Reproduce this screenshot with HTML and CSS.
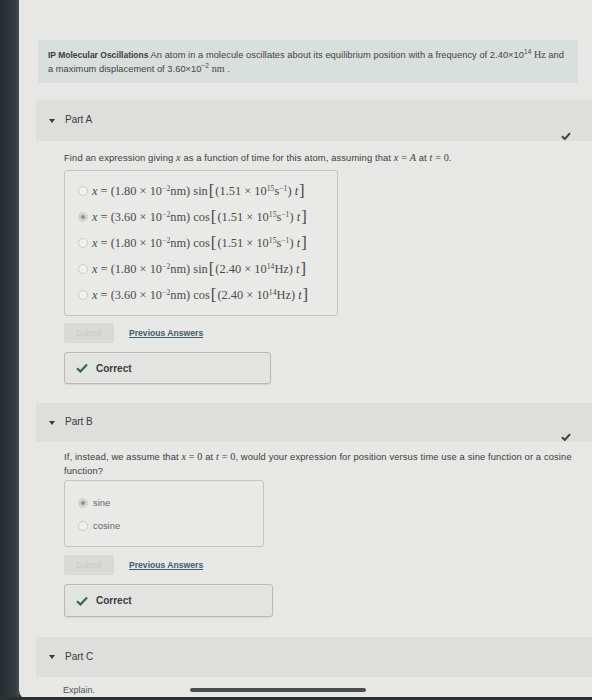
FILE: index.html
```html
<!DOCTYPE html>
<html>
<head>
<meta charset="utf-8">
<link rel="stylesheet" href="styles.css">
</head>
<body>
<div class="screen">
  <div class="bezel"></div>
  <div class="page">
    <div class="intro">
      <b>IP Molecular Oscillations</b> An atom in a molecule oscillates about its equilibrium position with a frequency of 2.40×10<sup>14</sup> <span class="m">Hz</span> and a maximum displacement of 3.60×10<sup>−2</sup> <span class="m">nm</span> .
    </div>

    <section class="part part-a">
      <div class="part-head">
        <span class="tri"></span><span class="part-title">Part A</span>
        <svg class="hcheck" viewBox="0 0 10 8" width="10" height="8"><path d="M1 4.2 L3.8 7 L9 1.2" fill="none" stroke="#33473f" stroke-width="2"/></svg>
      </div>
      <div class="part-body">
        <p class="q">Find an expression giving <i class="m">x</i> as a function of time for this atom, assuming that <i class="m">x</i> <span class="m">= </span><i class="m">A</i> at <i class="m">t</i> <span class="m">= 0</span>.</p>
        <div class="opts opts-a">
          <div class="opt"><span class="radio"></span><span class="math"><i>x</i> = (1.80 × 10<sup>−2</sup>nm) sin<span class="br">[</span>(1.51 × 10<sup>15</sup>s<sup>−1</sup>) <i>t</i><span class="br">]</span></span></div>
          <div class="opt"><span class="radio on"></span><span class="math"><i>x</i> = (3.60 × 10<sup>−2</sup>nm) cos<span class="br">[</span>(1.51 × 10<sup>15</sup>s<sup>−1</sup>) <i>t</i><span class="br">]</span></span></div>
          <div class="opt"><span class="radio"></span><span class="math"><i>x</i> = (1.80 × 10<sup>−2</sup>nm) cos<span class="br">[</span>(1.51 × 10<sup>15</sup>s<sup>−1</sup>) <i>t</i><span class="br">]</span></span></div>
          <div class="opt"><span class="radio"></span><span class="math"><i>x</i> = (1.80 × 10<sup>−2</sup>nm) sin<span class="br">[</span>(2.40 × 10<sup>14</sup>Hz) <i>t</i><span class="br">]</span></span></div>
          <div class="opt"><span class="radio"></span><span class="math"><i>x</i> = (3.60 × 10<sup>−2</sup>nm) cos<span class="br">[</span>(2.40 × 10<sup>14</sup>Hz) <i>t</i><span class="br">]</span></span></div>
        </div>
        <div class="actions">
          <span class="submit">Submit</span>
          <a class="prev">Previous Answers</a>
        </div>
        <div class="correct">
          <svg class="ccheck" viewBox="0 0 12 10" width="12" height="10"><path d="M1 5.2 L4.4 8.5 L11 1.5" fill="none" stroke="#2f6b45" stroke-width="2.2"/></svg>
          <span>Correct</span>
        </div>
      </div>
    </section>

    <section class="part part-b">
      <div class="part-head">
        <span class="tri"></span><span class="part-title">Part B</span>
        <svg class="hcheck" viewBox="0 0 10 8" width="10" height="8"><path d="M1 4.2 L3.8 7 L9 1.2" fill="none" stroke="#33473f" stroke-width="2"/></svg>
      </div>
      <div class="part-body">
        <p class="q q2">If, instead, we assume that <i class="m">x</i> <span class="m">= 0</span> at <i class="m">t</i> <span class="m">= 0</span>, would your expression for position versus time use a sine function or a cosine function?</p>
        <div class="opts opts-b">
          <div class="opt opt-b"><span class="radio on"></span><span class="word">sine</span></div>
          <div class="opt opt-b"><span class="radio"></span><span class="word">cosine</span></div>
        </div>
        <div class="actions">
          <span class="submit">Submit</span>
          <a class="prev">Previous Answers</a>
        </div>
        <div class="correct">
          <svg class="ccheck" viewBox="0 0 12 10" width="12" height="10"><path d="M1 5.2 L4.4 8.5 L11 1.5" fill="none" stroke="#2f6b45" stroke-width="2.2"/></svg>
          <span>Correct</span>
        </div>
      </div>
    </section>

    <section class="part part-c">
      <div class="part-head">
        <span class="tri"></span><span class="part-title">Part C</span>
      </div>
      <div class="part-body">
        <p class="explain">Explain.</p>
      </div>
    </section>
  </div>
  <div class="home-bar"></div>
  <div class="bottom-edge"></div>
</div>
</body>
</html>
```

FILE: styles.css
```css
html, body {
  margin: 0;
  padding: 0;
  width: 592px;
  height: 700px;
  overflow: hidden;
  background: #2b3033;
}

.screen {
  position: relative;
  display: flex;
  width: 592px;
  height: 700px;
  overflow: hidden;
  font-family: "Liberation Sans", Arial, sans-serif;
  color: #3a3a3a;
}

.bezel {
  width: 19px;
  flex: none;
  background: linear-gradient(90deg, #252b2e 0%, #343b3f 80%, #4a5154 100%);
}

.page {
  flex: 1;
  background: #e7e7e5;
  padding: 40px 0 0 17px;
  border-bottom-left-radius: 10px;
}

.intro {
  margin: 0 14px 0 2px;
  padding: 8px 12px 7px 10px;
  background: #d8dfdc;
  font-size: 9.3px;
  line-height: 14px;
  color: #444;
  letter-spacing: 0.04px;
}

.intro b {
  color: #3c3c3c;
  font-size: 8.5px;
  letter-spacing: 0;
}

sup {
  font-size: 0.7em;
  line-height: 0;
  vertical-align: 0.55em;
}

.m {
  font-family: "Liberation Serif", "DejaVu Serif", serif;
  font-size: 1.08em;
  line-height: 1;
}

.part-a {
  margin-top: 17px;
}

.part-b {
  margin-top: 19px;
}

.part-c {
  margin-top: 20px;
}

.part-head {
  display: flex;
  align-items: center;
  height: 41px;
  background: #dededc;
  padding-left: 13px;
  position: relative;
}

.part-b .part-head {
  height: 39px;
}

.part-c .part-head {
  height: 40px;
}

.tri {
  width: 0;
  height: 0;
  border-left: 3.5px solid transparent;
  border-right: 3.5px solid transparent;
  border-top: 4px solid #3a3a3a;
  margin-right: 10px;
}

.part-title {
  font-size: 10px;
  color: #3a3a3a;
  margin-top: -2px;
}

.hcheck {
  position: absolute;
  right: 21px;
  bottom: 1px;
}

.part-body {
  padding: 10px 0 0 28px;
}

.part-b .part-body {
  padding-top: 10px;
}

.part-c .part-body {
  padding-top: 8px;
}

.q {
  margin: 0;
  font-size: 9.4px;
  line-height: 14px;
  color: #3c3c3c;
  letter-spacing: 0.12px;
}

.q2 {
  margin-top: -2px;
  padding-right: 12px;
}

.opts {
  margin-top: 6px;
  border: 1px solid #c4c4c2;
  border-radius: 3px;
  background: #e9e9e7;
}

.opts-a {
  width: 272px;
  padding: 7px 0 7px;
}

.opts-a.opts {
  margin-top: 5px;
}

.opts-b {
  width: 198px;
  padding: 10px 0 9px;
  margin-top: 2px;
}

.opt {
  display: flex;
  align-items: center;
  height: 26px;
  padding-left: 13px;
}

.opt-b {
  height: 23px;
}

.radio {
  width: 10px;
  height: 10px;
  border-radius: 50%;
  border: 1px solid #c9cccb;
  background: #f0f0ee;
  margin-right: 4px;
  flex: none;
  box-sizing: border-box;
}

.radio.on {
  background: radial-gradient(circle, #8f9594 0 1.6px, #cfd2d1 2.2px);
  border-color: #cfd2d1;
}

.math {
  font-family: "Liberation Serif", "DejaVu Serif", serif;
  font-size: 12.4px;
  color: #4a4a4a;
  white-space: nowrap;
}

.math sup {
  font-size: 0.62em;
}

.br {
  font-size: 1.35em;
  line-height: 0;
  vertical-align: -0.08em;
  margin: 0 1px;
  font-weight: 300;
}

.word {
  font-size: 9.4px;
  color: #666;
  margin-left: 1px;
}

.actions {
  display: flex;
  align-items: center;
  margin-top: 7px;
  height: 20px;
}

.part-b .actions {
  margin-top: 8px;
}

.submit {
  width: 50px;
  height: 20px;
  background: #d9d9d7;
  color: #cacac8;
  font-size: 8.5px;
  display: flex;
  align-items: center;
  justify-content: center;
  border-radius: 2px;
}

.prev {
  margin-left: 15px;
  font-size: 8.6px;
  font-weight: bold;
  color: #3f5d6e;
  text-decoration: underline;
}

.correct {
  box-sizing: border-box;
  margin-top: 9px;
  width: 207px;
  height: 32px;
  border: 1px solid #b9b9b7;
  border-radius: 3px;
  background: #e3e3e1;
  box-shadow: 0 1px 1px rgba(0,0,0,0.08);
  display: flex;
  align-items: center;
  padding-left: 11px;
}

.part-b .correct {
  height: 33px;
  width: 209px;
}

.ccheck {
  margin-right: 8px;
}

.correct span {
  font-size: 10px;
  font-weight: bold;
  color: #3a3a3a;
}

.explain {
  margin: 0 0 0 -1px;
  font-size: 9px;
  line-height: 11px;
  color: #555;
}

.home-bar {
  position: absolute;
  left: 190px;
  top: 688px;
  width: 176px;
  height: 4px;
  border-radius: 2px;
  background: #4a4c4e;
}

.bottom-edge {
  position: absolute;
  left: 0;
  right: 0;
  bottom: 0;
  height: 3px;
  background: #2b3033;
}
```
